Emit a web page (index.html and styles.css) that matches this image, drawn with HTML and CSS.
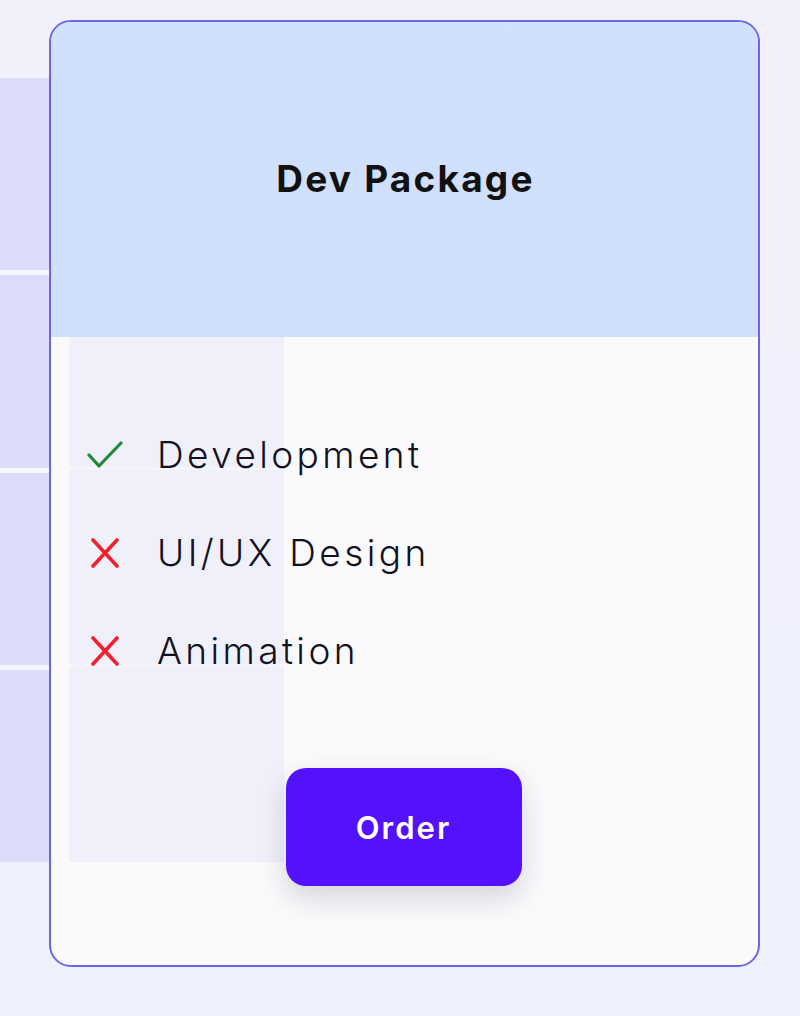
FILE: index.html
```html
<!DOCTYPE html>
<html lang="en">
<head>
<meta charset="utf-8">
<title>Dev Package</title>
<link rel="stylesheet" href="styles.css">
</head>
<body>
<div class="backdrop" aria-hidden="true">
  <div class="backdrop-row"></div>
  <div class="backdrop-row"></div>
  <div class="backdrop-row"></div>
  <div class="backdrop-row"></div>
</div>
<main class="card">
  <header class="card-head">
    <h1 class="title">Dev Package</h1>
  </header>
  <section class="card-body">
    <div class="ghost" aria-hidden="true">
      <div class="ghost-row"></div>
      <div class="ghost-row"></div>
      <div class="ghost-row"></div>
    </div>
    <ul class="features">
      <li class="feature">
        <svg class="icon" viewBox="0 0 36 30" width="36" height="30"><path d="M2 15 L12 26 L34 3" fill="none" stroke="#1f8a34" stroke-width="3.2" stroke-linecap="round" stroke-linejoin="round"/></svg>
        <span>Development</span>
      </li>
      <li class="feature">
        <svg class="icon" viewBox="0 0 36 30" width="36" height="30"><path d="M6 2 L30 28 M30 2 L6 28" fill="none" stroke="#f2202f" stroke-width="3.6" stroke-linecap="round"/></svg>
        <span>UI/UX Design</span>
      </li>
      <li class="feature">
        <svg class="icon" viewBox="0 0 36 30" width="36" height="30"><path d="M6 2 L30 28 M30 2 L6 28" fill="none" stroke="#f2202f" stroke-width="3.6" stroke-linecap="round"/></svg>
        <span>Animation</span>
      </li>
    </ul>
    <button class="order" type="button">Order</button>
  </section>
</main>
</body>
</html>
```
FILE: styles.css
```css
* { box-sizing: border-box; }

html, body {
  margin: 0;
  padding: 0;
}

body {
  width: 800px;
  height: 1016px;
  background: linear-gradient(180deg, #f1f1fb 0%, #eff0fb 60%, #eef0fd 100%);
  font-family: Inter, "Open Sans", "Liberation Sans", sans-serif;
  position: relative;
  overflow: hidden;
  padding-top: 20px;
  padding-left: 49px;
}

.backdrop {
  position: absolute;
  left: 0;
  top: 78px;
  width: 290px;
  height: 784px;
  display: flex;
  flex-direction: column;
  gap: 5px;
  background: #f6f6fe;
  z-index: 0;
}

.backdrop-row {
  flex: 1;
  background: #dcdcfa;
}

.card {
  position: relative;
  z-index: 1;
  width: 711px;
  height: 947px;
  border: 2px solid #6c66e6;
  border-radius: 22px;
  overflow: hidden;
  display: flex;
  flex-direction: column;
  background: #fafafc;
}

.card-head {
  height: 315px;
  background: linear-gradient(180deg, #d0e0fd 0%, #cfdffc 100%);
  display: flex;
  align-items: center;
  justify-content: center;
  padding-left: 2px;
  padding-bottom: 2px;
}

.title {
  margin: 0;
  font-size: 37px;
  font-weight: 700;
  color: #111;
  letter-spacing: 2.2px;
}

.card-body {
  position: relative;
  flex: 1;
  display: flex;
  flex-direction: column;
  align-items: center;
}

.ghost {
  position: absolute;
  left: 18px;
  top: 0;
  width: 215px;
  height: 525px;
  background: #f5f5fc;
  display: flex;
  flex-direction: column;
  gap: 3px;
  z-index: 0;
}

.ghost-row {
  flex: 1;
  background: #f0f0fa;
}

.ghost-row:first-child { flex: 0 0 130px; }
.ghost-row:nth-child(2) { flex: 0 0 194px; }

.features {
  position: relative;
  z-index: 1;
  list-style: none;
  margin: 0;
  padding: 96px 0 0 36px;
  align-self: stretch;
  display: flex;
  flex-direction: column;
  gap: 55px;
}

.feature {
  display: flex;
  align-items: center;
  height: 43px;
  font-size: 37px;
  font-weight: 300;
  color: #111122;
  letter-spacing: 3.4px;
}

.icon {
  flex: none;
  margin-right: 34px;
}

.order {
  position: relative;
  z-index: 1;
  margin-top: 96px;
  width: 236px;
  height: 118px;
  border: none;
  border-radius: 20px;
  background: #5411fc;
  color: #ffffff;
  font-family: Inter, "Open Sans", sans-serif;
  font-size: 31px;
  font-weight: 600;
  letter-spacing: 2px;
  box-shadow: 0 12px 28px rgba(40, 40, 70, 0.18);
  margin-left: -2px;
}
```
